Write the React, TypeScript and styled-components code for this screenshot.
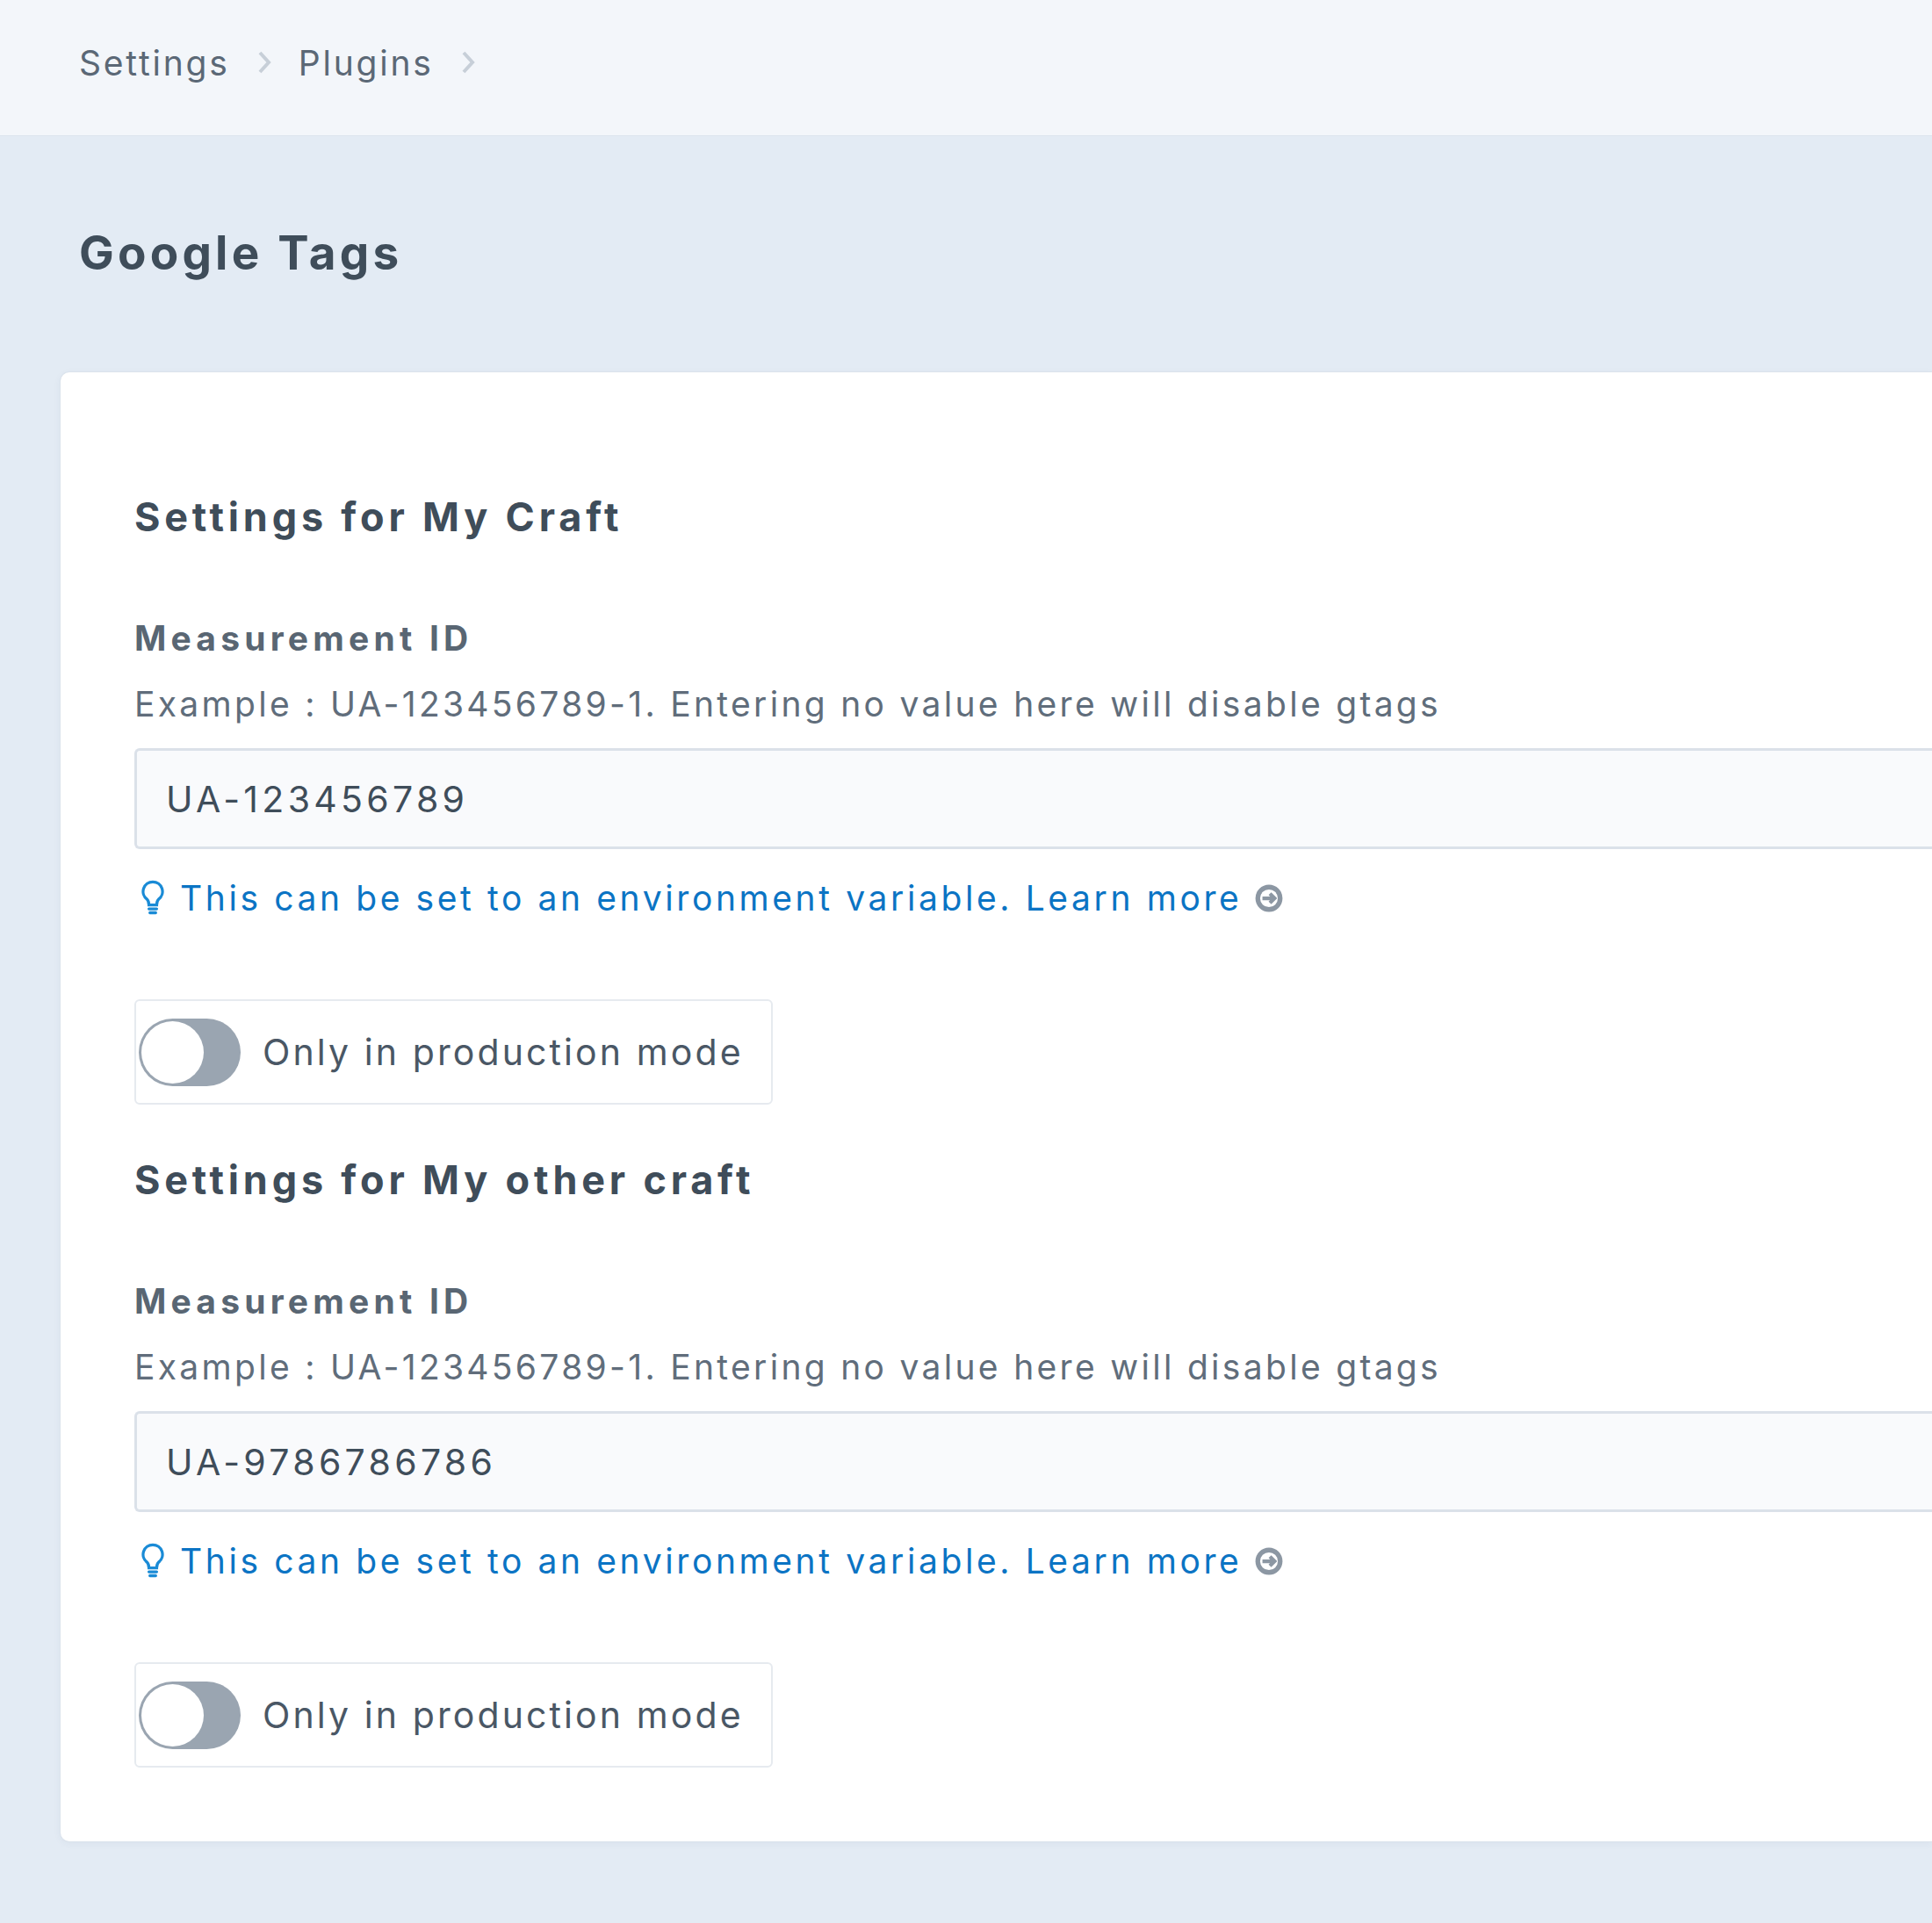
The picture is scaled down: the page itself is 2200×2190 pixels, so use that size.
import React from "react";
import styled, { createGlobalStyle } from "styled-components";

const GlobalStyle = createGlobalStyle`
  html, body { margin: 0; padding: 0; }
  body {
    background: #e3ebf4;
    font-family: Inter, "Open Sans", "Liberation Sans", sans-serif;
    color: #3f4d5a;
    width: 2200px;
    min-height: 2190px;
    overflow: hidden;
  }
`;

const Header = styled.header`
  height: 154px;
  background: #f3f6fa;
  display: flex;
  align-items: center;
  padding: 0 90px 12px;
  box-sizing: border-box;
  box-shadow: 0 1px 0 #dde5ee;
  gap: 30px;
`;

const Crumb = styled.span`
  font-size: 39px;
  letter-spacing: 2.8px;
  color: #5b6876;
`;

const Chevron = styled.svg`
  width: 18px;
  height: 30px;
`;

const Main = styled.main`
  padding: 104px 0 0 69px;
`;

const Title = styled.h1`
  margin: 0 0 106px 21px;
  font-size: 53px;
  line-height: 60px;
  font-weight: 700;
  color: #3f4d5a;
  letter-spacing: 4.2px;
`;

const Card = styled.div`
  background: #fff;
  border-radius: 10px 0 0 10px;
  padding: 135px 0 84px 84px;
  box-shadow: 0 0 0 1px #dbe3ec, 0 2px 10px rgba(50, 70, 100, 0.06);
`;

const SectionTitle = styled.h2<{ $first?: boolean }>`
  margin: ${(p) => (p.$first ? "0" : "56px")} 0 83px;
  font-size: 45px;
  line-height: 60px;
  font-weight: 700;
  letter-spacing: 4.8px;
  color: #3f4d5a;
`;

const Label = styled.div`
  font-size: 39px;
  line-height: 50px;
  font-weight: 700;
  letter-spacing: 5.2px;
  color: #596673;
`;

const Instructions = styled.div`
  margin-top: 25px;
  font-size: 39px;
  line-height: 50px;
  letter-spacing: 3.3px;
  color: #606d7b;
`;

const Input = styled.div`
  margin-top: 25px;
  height: 115px;
  box-sizing: border-box;
  background: #f9fafc;
  border: 3px solid #dbe1e9;
  border-right: none;
  border-radius: 6px 0 0 6px;
  display: flex;
  align-items: center;
  padding-left: 33px;
  font-size: 41px;
  letter-spacing: 4.3px;
  color: #3f4d5a;
`;

const Hint = styled.div`
  margin-top: 31px;
  display: flex;
  align-items: center;
  gap: 14px;
  font-size: 39px;
  line-height: 50px;
  letter-spacing: 3.6px;
  color: #0b74c4;
`;

const ToggleBox = styled.div`
  margin-top: 90px;
  width: 727px;
  height: 120px;
  box-sizing: border-box;
  border: 2px solid #e6eaef;
  border-radius: 6px;
  display: flex;
  align-items: center;
  padding-left: 3px;
  gap: 25px;
`;

const Switch = styled.div`
  width: 116px;
  height: 77px;
  border-radius: 40px;
  background: #9aa5b1;
  display: flex;
  align-items: center;
  padding: 3px;
  box-sizing: border-box;
`;

const Knob = styled.div`
  width: 71px;
  height: 71px;
  border-radius: 50%;
  background: #fff;
`;

const ToggleLabel = styled.span`
  font-size: 41px;
  letter-spacing: 3.1px;
  color: #4a5765;
`;

const Bulb = () => (
  <svg width="34" height="44" viewBox="0 0 26 40" fill="none" stroke="#1a8bd6" strokeWidth="3" style={{ marginLeft: 4 }}>
    <path d="M13 3a10 10 0 0 0-6 18c2 2 2 4 2 6h8c0-2 0-4 2-6A10 10 0 0 0 13 3z" />
    <path d="M9 31h8M10 35h6" strokeLinecap="round" />
  </svg>
);

const ArrowCircle = () => (
  <svg width="34" height="34" viewBox="0 0 32 32" fill="none" stroke="#8c97a3" strokeWidth="5">
    <circle cx="16" cy="16" r="12" />
    <path d="M9 16h13M17 11l5 5-5 5" strokeWidth="4" />
  </svg>
);

const Section = ({ name, value, first }: { name: string; value: string; first?: boolean }) => (
  <>
    <SectionTitle $first={first}>Settings for {name}</SectionTitle>
    <Label>Measurement ID</Label>
    <Instructions>Example : UA-123456789-1. Entering no value here will disable gtags</Instructions>
    <Input>{value}</Input>
    <Hint>
      <Bulb />
      <span>This can be set to an environment variable. Learn more</span>
      <ArrowCircle />
    </Hint>
    <ToggleBox>
      <Switch>
        <Knob />
      </Switch>
      <ToggleLabel>Only in production mode</ToggleLabel>
    </ToggleBox>
  </>
);

const Sep = () => (
  <Chevron viewBox="0 0 18 30" fill="none" stroke="#c7cfd8" strokeWidth="4">
    <path d="M4 4l10 11-10 11" />
  </Chevron>
);

export default function App() {
  return (
    <>
      <GlobalStyle />
      <Header>
        <Crumb>Settings</Crumb>
        <Sep />
        <Crumb>Plugins</Crumb>
        <Sep />
      </Header>
      <Main>
        <Title>Google Tags</Title>
        <Card>
          <Section first name="My Craft" value="UA-123456789" />
          <Section name="My other craft" value="UA-9786786786" />
        </Card>
      </Main>
    </>
  );
}
